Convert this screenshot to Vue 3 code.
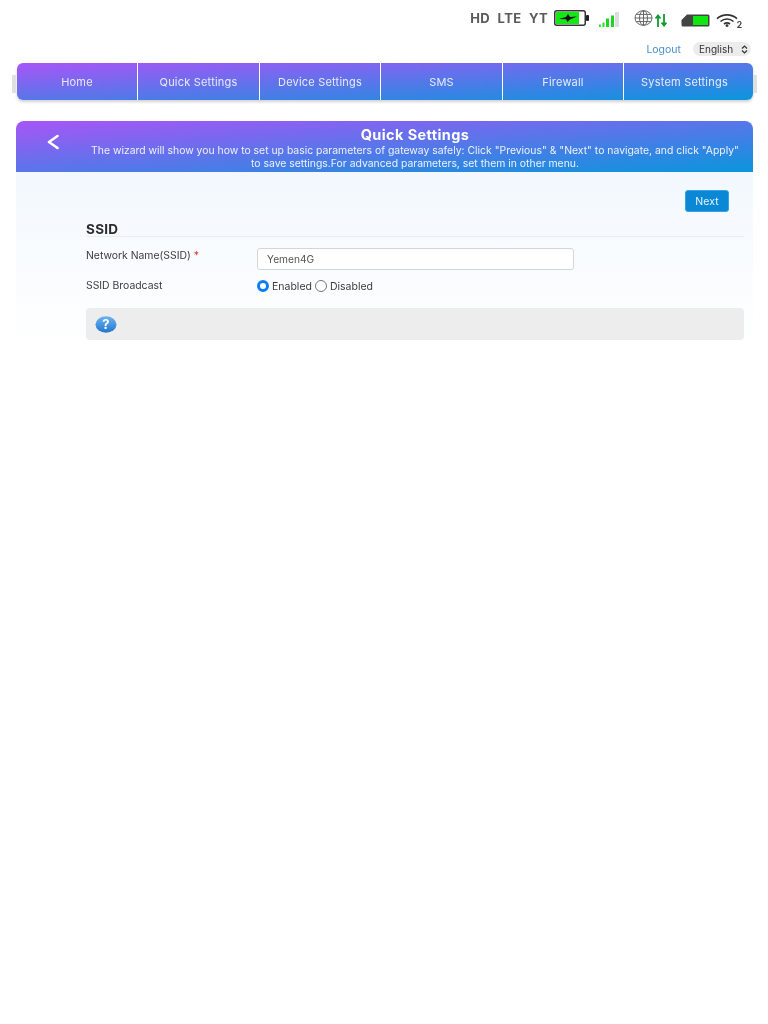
<script setup>
const menu = ['Home', 'Quick Settings', 'Device Settings', 'SMS', 'Firewall', 'System Settings']
</script>

<template>
  <div class="page">
    <header class="status">
      <span class="tag">HD</span>
      <span class="tag">LTE</span>
      <span class="tag">YT</span>
      <svg class="battery" width="35" height="16" viewBox="0 0 35 16">
        <rect x="0.75" y="0.75" width="30.5" height="14.5" rx="2" fill="#fff" stroke="#333" stroke-width="1.5" />
        <rect x="2" y="2" width="23" height="12" fill="#16e616" />
        <rect x="32" y="5" width="3" height="6" rx="1" fill="#222" />
        <path d="M5 9 L12 7 L14 4 L16 7 L23 6.500 L16 9.500 L13.500 12 L12 9.300 Z" fill="#111" />
      </svg>
      <svg class="signal" width="20" height="15" viewBox="0 0 20 15">
        <rect x="0" y="12.500" width="1.800" height="2.500" fill="#22e022" />
        <rect x="3.500" y="10.500" width="2" height="4.500" fill="#22e022" />
        <rect x="7" y="6.500" width="3" height="8.500" fill="#22d422" />
        <rect x="12" y="3.500" width="3" height="11.500" fill="#22d422" />
        <rect x="16" y="0" width="4" height="15" fill="#dedede" />
      </svg>
      <svg class="globe" width="19" height="16" viewBox="0 0 19 16" fill="none" stroke="#666" stroke-width="1">
        <ellipse cx="9.500" cy="8" rx="8.500" ry="7.300" />
        <ellipse cx="9.500" cy="8" rx="4" ry="7.300" />
        <path d="M9.500 .7V15.300M1 8H18M2.200 4.400H16.800M2.200 11.600H16.800" />
      </svg>
      <svg class="arrows" width="12" height="13" viewBox="0 0 12 13" fill="none" stroke="#109a30" stroke-width="1.800">
        <path d="M3 13V2M.5 4.500L3 1.500L5.500 4.500" />
        <path d="M9 0V11M6.500 8.500L9 11.500L11.500 8.500" />
      </svg>
      <svg class="sim" width="29" height="13" viewBox="0 0 29 13">
        <path d="M6 .5H27A1.500 1.500 0 0 1 28.500 2V11A1.500 1.500 0 0 1 27 12.500H2A1.500 1.500 0 0 1 .5 11V6Z" fill="#444" />
        <rect x="12" y="2" width="15" height="9" fill="#10e610" />
      </svg>
      <svg class="wifi" width="22" height="13" viewBox="0 0 22 13" fill="none" stroke="#333" stroke-width="1.600">
        <path d="M1 4.600C6.500 -.4 15.500 -.4 21 4.600" />
        <path d="M4.500 7.500C8.200 4.200 13.800 4.200 17.500 7.500" />
        <path d="M8 10C9.800 8.600 12.200 8.600 14 10" />
        <circle cx="11" cy="11.600" r="1.400" fill="#333" stroke="none" />
      </svg>
      <span class="wifi-count">2</span>
    </header>

    <div class="account">
      <a class="logout">Logout</a>
      <div class="lang">
        <span>English</span>
        <svg width="7" height="9" viewBox="0 0 7 9" fill="none" stroke="#333" stroke-width="1.200">
          <path d="M1 3.500L3.500 1L6 3.500M1 5.500L3.500 8L6 5.500" />
        </svg>
      </div>
    </div>

    <nav class="menu">
      <a v-for="item in menu" :key="item" class="menu-item">{{ item }}</a>
    </nav>

    <section class="wizard">
      <div class="wizard-head">
        <svg class="back" width="13" height="16" viewBox="0 0 13 16" fill="none" stroke="#fff" stroke-width="2.600" stroke-linecap="round" stroke-linejoin="round">
          <path d="M11.500 2L3 8L11.500 14" />
        </svg>
        <h1>Quick Settings</h1>
        <p>The wizard will show you how to set up basic parameters of gateway safely: Click "Previous" &amp; "Next" to navigate, and click "Apply" to save settings.For advanced parameters, set them in other menu.</p>
      </div>

      <div class="wizard-body">
        <div class="actions">
          <button class="next" type="button">Next</button>
        </div>
        <div class="form">
          <h2>SSID</h2>
          <div class="row row-name">
            <label class="label">Network Name(SSID) <em>*</em></label>
            <input class="text" type="text" value="Yemen4G" />
          </div>
          <div class="row row-radio">
            <span class="label">SSID Broadcast</span>
            <div class="radios">
              <span class="radio on"></span><span>Enabled</span>
              <span class="radio"></span><span>Disabled</span>
            </div>
          </div>
          <div class="help">
            <svg width="22" height="17" viewBox="0 0 22 17">
              <defs>
                <linearGradient id="helpfill" x1="0" y1="0" x2="0" y2="1">
                  <stop offset="0" stop-color="#6db4f0" />
                  <stop offset="1" stop-color="#2275d0" />
                </linearGradient>
              </defs>
              <ellipse cx="11" cy="8.500" rx="10.500" ry="8.300" fill="url(#helpfill)" />
              <text x="11" y="13" text-anchor="middle" class="help-mark">?</text>
            </svg>
          </div>
        </div>
      </div>
    </section>
  </div>
</template>

<style scoped>
.page {
  width: 768px;
  min-height: 1024px;
  background: #fff;
  color: #333;
  font-family: Inter, "Liberation Sans", Arial, sans-serif;
  font-size: 10.4px;
  box-sizing: border-box;
  overflow: hidden;
  filter: blur(0.4px);
}
.status {
  display: flex;
  justify-content: flex-end;
  align-items: center;
  height: 36px;
  padding-right: 26px;
  box-sizing: border-box;
}
.tag {
  font-size: 13px;
  font-weight: 700;
  letter-spacing: 0.4px;
  color: #5a5a5a;
  margin-right: 7.500px;
}
.tag:nth-child(3) { margin-right: 5.500px; }
.battery { margin-right: 10px; }
.signal { margin-right: 15px; margin-top: 2px; }
.globe { margin-right: 2px; }
.arrows { margin-right: 14px; margin-top: 4px; }
.sim { margin-right: 6px; margin-top: 4px; }
.wifi { margin-top: 4px; }
.wifi-count {
  font-size: 8.500px;
  font-weight: 700;
  color: #444;
  align-self: flex-end;
  margin-bottom: 6px;
  margin-left: -1px;
}
.account {
  display: flex;
  justify-content: flex-end;
  align-items: center;
  height: 26px;
  margin-bottom: 1px;
  padding-right: 17px;
  box-sizing: border-box;
}
.logout {
  color: #4a8fcb;
  font-size: 10.500px;
  margin-right: 12px;
}
.lang {
  display: flex;
  align-items: center;
  justify-content: space-between;
  width: 58px;
  height: 14px;
  padding: 0 3px 0 6px;
  box-sizing: border-box;
  background: #ececec;
  border-radius: 7px;
  font-size: 10px;
  color: #333;
}
.menu {
  position: relative;
  display: grid;
  grid-template-columns: 120px 122px 121px 122px 121px 130px;
  height: 37px;
  margin: 0 15px 0 17px;
  border-radius: 6px;
  background: linear-gradient(to bottom right, #a855f7, #0a96dc);
  box-shadow: 0 2px 3px rgba(0, 0, 0, 0.18);
}
.menu::before,
.menu::after {
  content: "";
  position: absolute;
  top: 12px;
  width: 4px;
  height: 18px;
  background: #e0e0e0;
}
.menu::before { left: -5px; }
.menu::after { right: -4px; }
.menu-item {
  display: flex;
  align-items: center;
  justify-content: center;
  color: #e6ecfb;
  font-size: 11px;
  letter-spacing: 0.2px;
  border-left: 1px solid #fff;
}
.menu-item:first-child { border-left: 0; }
.menu-item:last-child { padding-right: 8px; }
.wizard {
  margin: 21px 15px 0 16px;
}
.wizard-head {
  position: relative;
  height: 51px;
  padding: 4px 0 0 61px;
  box-sizing: border-box;
  border-radius: 8px 8px 0 0;
  background: linear-gradient(to bottom right, #a855f7, #0a96dc);
  text-align: center;
  color: #fff;
}
.back {
  position: absolute;
  left: 30px;
  top: 13px;
}
.wizard-head h1 {
  margin: 0;
  font-size: 14.500px;
  letter-spacing: 0.4px;
  line-height: 19px;
  font-weight: 700;
}
.wizard-head p {
  margin: 0 auto;
  width: 655px;
  font-size: 10.400px;
  line-height: 13px;
  color: #eef1fd;
}
.wizard-body {
  height: 178px;
  padding: 18px 9px 0 70px;
  box-sizing: border-box;
  background: linear-gradient(to bottom, #f2f8fe, #fff);
}
.actions {
  display: flex;
  justify-content: flex-end;
  padding-right: 15px;
}
.next {
  width: 44px;
  height: 22px;
  padding: 0;
  border: 1px solid #3aa0e0;
  border-radius: 3px;
  background: #0a88d6;
  color: #e6f3fc;
  font-family: inherit;
  font-size: 10.500px;
  letter-spacing: 0.1px;
}
.form h2 {
  margin: 10px 0 0;
  height: 14px;
  line-height: 14px;
  font-size: 13.500px;
  letter-spacing: 0.3px;
  font-weight: 700;
  color: #2c2c2c;
  border-bottom: 1px solid #e8edf0;
}
.row {
  display: flex;
  align-items: flex-start;
}
.row-name { margin-top: 11px; height: 22px; }
.row-radio { margin-top: 8px; height: 16px; }
.label {
  width: 171px;
  flex: none;
  margin-top: 1px;
  line-height: 13px;
  color: #3c3c3c;
}
.label em {
  color: #d9342b;
  font-style: normal;
}
.text {
  width: 317px;
  height: 22px;
  padding: 0 9px;
  box-sizing: border-box;
  border: 1px solid #d6d6d6;
  border-radius: 3px;
  background: #fff;
  color: #555;
  font-family: inherit;
  font-size: 10.200px;
  outline: none;
}
.radios {
  display: flex;
  align-items: center;
  height: 14px;
  margin-top: 1px;
  font-size: 10.500px;
  color: #3c3c3c;
}
.radio {
  width: 12px;
  height: 12px;
  margin-right: 3px;
  box-sizing: border-box;
  border: 1px solid #777;
  border-radius: 50%;
  background: #fff;
}
.radio.on {
  border: 3.500px solid #0a7cf5;
}
.radios span:nth-child(3) { margin-left: 3px; }
.help {
  display: flex;
  align-items: center;
  height: 32px;
  margin-top: 14px;
  padding-left: 9px;
  border-radius: 4px;
  background: #ededed;
}
.help-mark {
  fill: #fff;
  font-size: 13px;
  font-weight: 700;
  font-family: Inter, "Liberation Sans", Arial, sans-serif;
}
</style>
